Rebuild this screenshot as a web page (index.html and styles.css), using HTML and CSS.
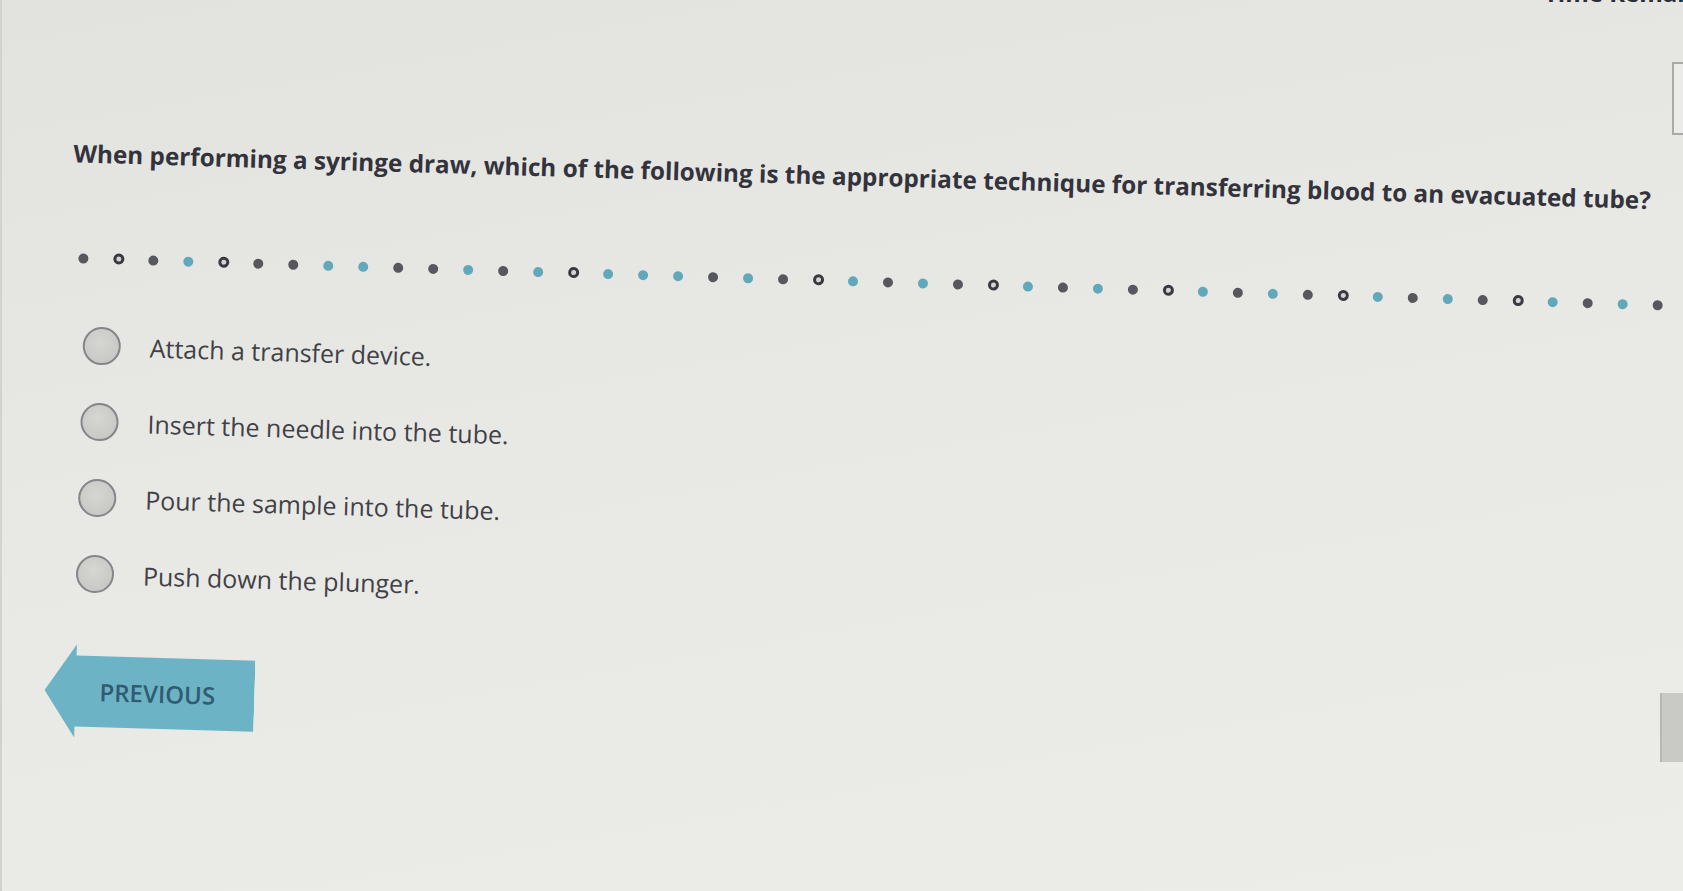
FILE: index.html
```html
<!DOCTYPE html>
<html lang="en">
<head>
    <meta charset="UTF-8">
    <meta name="viewport" content="width=device-width, initial-scale=1.0">
    <title>Quiz question</title>
    <link rel="stylesheet" href="styles.css">
</head>
<body>
    <div class="page">
        <main class="quiz">
            <h1 class="question">When performing a syringe draw, which of the following is the appropriate technique for transferring blood to an evacuated tube?</h1>

            <div class="dots">
                <span class="dot d"></span><span class="dot r"></span><span class="dot d"></span><span class="dot t"></span><span class="dot r"></span>
                <span class="dot d"></span><span class="dot d"></span><span class="dot t"></span><span class="dot t"></span><span class="dot d"></span>
                <span class="dot d"></span><span class="dot t"></span><span class="dot d"></span><span class="dot t"></span><span class="dot r"></span>
                <span class="dot t"></span><span class="dot t"></span><span class="dot t"></span><span class="dot d"></span><span class="dot t"></span>
                <span class="dot d"></span><span class="dot r"></span><span class="dot t"></span><span class="dot d"></span><span class="dot t"></span>
                <span class="dot d"></span><span class="dot r"></span><span class="dot t"></span><span class="dot d"></span><span class="dot t"></span>
                <span class="dot d"></span><span class="dot r"></span><span class="dot t"></span><span class="dot d"></span><span class="dot t"></span>
                <span class="dot d"></span><span class="dot r"></span><span class="dot t"></span><span class="dot d"></span><span class="dot t"></span>
                <span class="dot d"></span><span class="dot r"></span><span class="dot t"></span><span class="dot d"></span><span class="dot t"></span>
                <span class="dot d"></span>
            </div>

            <form class="options">
                <label class="option"><input type="radio" name="answer"><span class="radio"></span>Attach a transfer device.</label>
                <label class="option"><input type="radio" name="answer"><span class="radio"></span>Insert the needle into the tube.</label>
                <label class="option"><input type="radio" name="answer"><span class="radio"></span>Pour the sample into the tube.</label>
                <label class="option"><input type="radio" name="answer"><span class="radio"></span>Push down the plunger.</label>
            </form>

            <button class="prev-button" type="button">PREVIOUS</button>
        </main>

        <aside class="side">
            <div class="timer"><span class="timer-label">Time Remaining</span></div>
            <div class="timer-box"></div>
            <div class="next-tab"></div>
        </aside>
    </div>
</body>
</html>
```

FILE: styles.css
```css
html, body {
    margin: 0;
    height: 100%;
}
body {
    font-family: "Open Sans", "Liberation Sans", sans-serif;
    background: linear-gradient(170deg, #e2e2df 0%, #e8e8e5 45%, #ecece9 100%);
    color: #3d3d44;
    overflow: hidden;
    border-left: 2px solid #d2d2cf;
    box-sizing: border-box;
}
.page {
    display: grid;
    grid-template-columns: 1fr 23px;
    align-items: start;
    height: 100%;
}

/* the whole question sheet sits a little askew */
.quiz {
    transform: rotate(1.7deg);
    transform-origin: 0 0;
    padding: 135px 0 0 63px;
    min-width: 0;
}
.question {
    margin: 0 0 83px 13px;
    font-size: 24.3px;
    line-height: 32px;
    font-weight: 700;
    color: #33333c;
    white-space: nowrap;
}

.dots {
    display: flex;
    align-items: center;
    gap: 25px;
    margin-left: 21px;
    margin-bottom: 63px;
}
.dot {
    width: 10px;
    height: 10px;
    border-radius: 50%;
    box-sizing: border-box;
    flex: none;
}
.dot.d {
    background-color: #57575e;
}
.dot.r {
    width: 11px;
    height: 11px;
    margin: 0 -0.5px;
    background-color: #d4d4d2;
    border: 3.5px solid #393941;
}
.dot.t {
    background-color: #62a8bb;
}

.options {
    display: flex;
    flex-direction: column;
    gap: 38px;
    margin-left: 28px;
    margin-bottom: 52px;
}
.option {
    display: flex;
    align-items: center;
    gap: 29px;
    height: 38px;
    font-size: 25px;
    color: #414147;
    cursor: pointer;
}
.option input {
    display: none;
}
.radio {
    width: 38px;
    height: 38px;
    border-radius: 50%;
    border: 2px solid #85858a;
    background: radial-gradient(circle at 45% 40%, #d6d6d3, #c3c3c0);
    box-sizing: border-box;
    flex: none;
}
.option input:checked + .radio {
    background: radial-gradient(circle, #5a9fb2 35%, #d6d6d3 40%);
}

.prev-button {
    display: flex;
    align-items: center;
    width: 210px;
    height: 93px;
    padding: 0 30px 0 55px;
    border: none;
    background-color: #6cb3c6;
    color: #305b71;
    font-family: inherit;
    font-size: 24px;
    font-weight: 600;
    cursor: pointer;
    clip-path: polygon(0 50%, 31px 0, 31px 11px, 100% 11px, 100% 82px, 31px 82px, 31px 100%);
}

.side {
    display: flex;
    flex-direction: column;
    align-items: flex-end;
}
.timer {
    display: flex;
    justify-content: flex-end;
    width: 100%;
    height: 8px;
}
.timer-label {
    margin-top: -22px;
    margin-right: -54px;
    font-size: 24px;
    line-height: 30px;
    font-weight: 700;
    color: #2c2c36;
    white-space: nowrap;
}
.timer-box {
    width: 11px;
    height: 73px;
    margin-top: 54px;
    border: 2px solid #a9a9a7;
    border-right: none;
    background-color: #ebebe9;
    box-sizing: border-box;
}
.next-tab {
    width: 23px;
    height: 69px;
    margin-top: 558px;
    background-color: #c9c9c6;
    border-left: 2px solid #b7b7b4;
    box-sizing: border-box;
}
```
